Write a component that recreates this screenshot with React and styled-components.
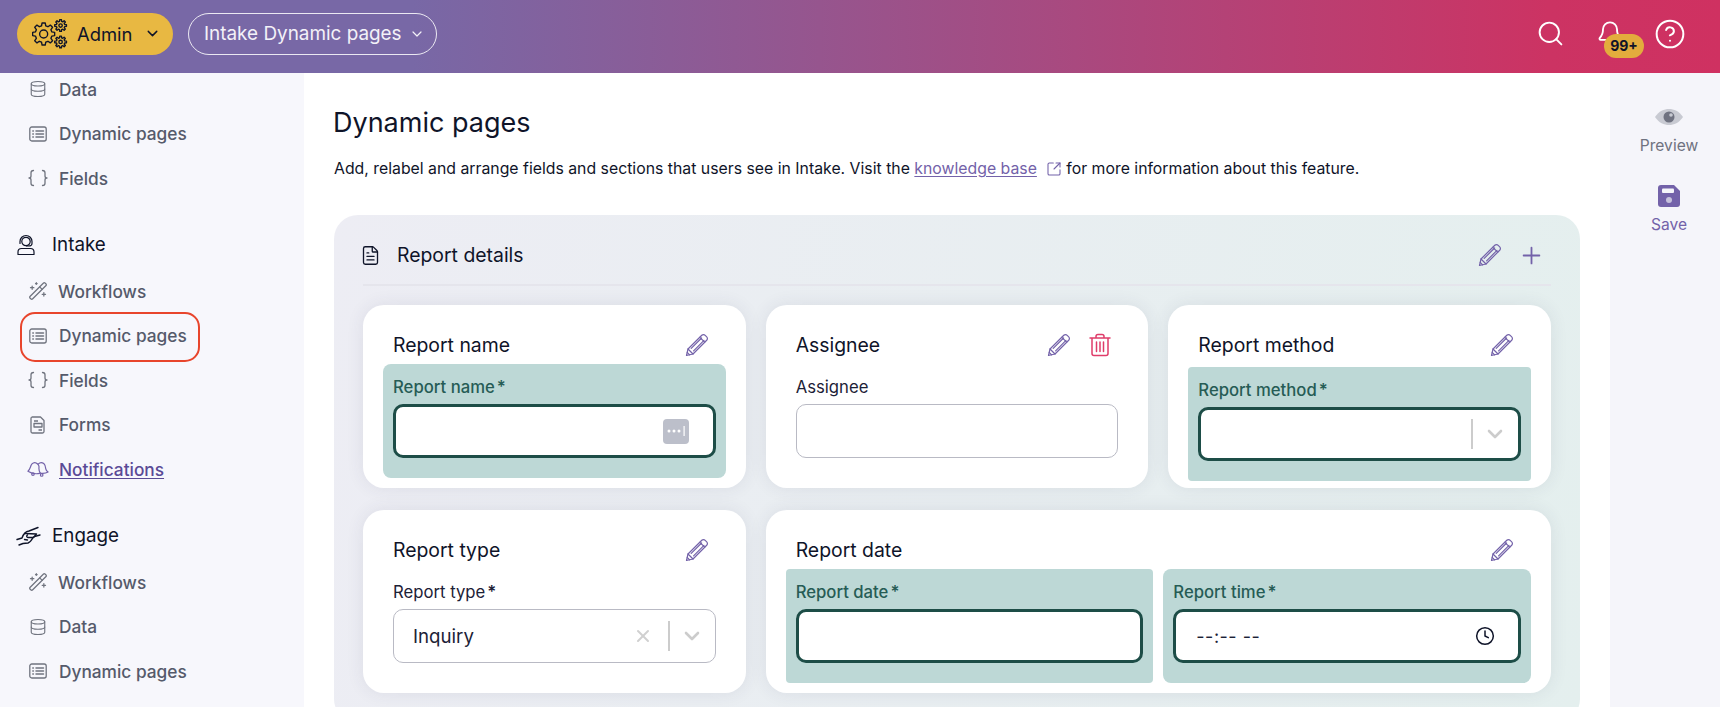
import React from "react";
import styled, { createGlobalStyle } from "styled-components";
import { Search, Bell, CircleHelp, WandSparkles, Database, ChevronDown, X, Clock, SquareArrowOutUpRight, Plus, FileText } from "lucide-react";

const Global = createGlobalStyle`
  html, body { margin: 0; padding: 0; height: 100%; overflow: hidden; background: #fff; }
  body { font-family: Inter, "Noto Sans", sans-serif; color: #0f1429; }
  *, *::before, *::after { box-sizing: border-box; }
`;

const Page = styled.div`
  width: 1720px; height: 707px; display: flex; flex-direction: column; overflow: hidden;
`;
const Header = styled.header`
  height: 73px; flex: none; display: flex; align-items: center; padding: 0 0 6px 17px; gap: 15px;
  background: linear-gradient(90deg, #7868a6 0, #7868a6 24%, #cc3363 90%, #cf3161 100%);
`;
const AdminPill = styled.button`
  height: 42px; width: 156px; border: 0; border-radius: 21px; background: #e8b842; color: #0f1429;
  display: flex; align-items: center; padding: 0 0 0 15px; font: 400 18.4px Inter, sans-serif;
  span { margin: 0 12px 0 9px; }
`;
const PagePill = styled.button`
  height: 42px; width: 249px; border: 1.5px solid rgba(255,255,255,.85); border-radius: 21px; background: transparent; color: #f3f1f8;
  display: flex; align-items: center; padding: 0 0 0 15px; font: 400 18.9px Inter, sans-serif; white-space: nowrap;
  span { margin-right: 7px; }
`;
const HeaderTools = styled.div`
  margin-left: auto; display: flex; align-items: center; color: #fff; padding-right: 20px;
`;
const ToolButton = styled.div`
  position: relative; display: flex; width: 60px; justify-content: center; align-items: center;
`;
const Badge = styled.span`
  position: absolute; left: 24px; top: 14px; width: 40px; height: 24px; border-radius: 12px; background: #e3ac3d; color: #0f1429;
  font: 700 14px/24px Inter, sans-serif; text-align: center;
`;
const Body = styled.div`
  flex: 1; display: flex; min-height: 0;
`;
const Sidebar = styled.aside`
  width: 304px; flex: none; background: #f7f7fc; overflow: hidden;
`;
const NavList = styled.nav`
  margin-top: -6px; padding-left: 20px;
`;
const NavItem = styled.a`
  position: relative; display: flex; align-items: center; height: 44.5px; gap: 12px; padding-left: 9px;
  font-size: 17.3px; font-weight: 500; color: ${p => p.$link ? "#5a4a96" : "#555a6b"};
  text-decoration: ${p => p.$link ? "underline" : "none"};
  text-underline-offset: 2px;
  svg { width: 18px; height: 18px; flex: none; color: ${p => p.$link ? "#7362a9" : "#70747f"}; }
  ${p => p.$marked && `
    &::after { content: ""; position: absolute; left: 0; top: -2px; width: 180px; height: 50px; border: 2.5px solid #e8452c; border-radius: 15px; }
  `}
`;
const Wand = styled(WandSparkles)`
  &&& { width: 20px; height: 20px; margin: 0 -2px 0 -1px; }
`;
const NavHeading = styled.div`
  display: flex; align-items: center; height: 49px; margin-top: 19.5px; margin-left: -3px; gap: 10px; font-size: 18.8px; color: #0f1429;
  svg { width: ${p => p.$wide ? "26px" : "18px"}; height: 22px; flex: none; margin-left: ${p => p.$wide ? "-1px" : "0"}; margin-right: ${p => p.$wide ? "0" : "7px"}; }
`;
const Main = styled.main`
  flex: 1; min-width: 0; padding: 0 30px; overflow: hidden;
`;
const Title = styled.h1`
  margin: 34px 0 0 -1px; font-size: 27px; line-height: 32px; font-weight: 400; color: #0f1429;
`;
const Intro = styled.p`
  margin: 18px 0 0; font-size: 15.82px; line-height: 24px; color: #0f1429; white-space: nowrap;
  display: flex; align-items: center;
`;
const KbLink = styled.a`
  color: #7362a9; text-decoration: underline; margin: 0 9px 0 0; text-underline-offset: 2px;
`;
const KbIcon = styled.span`
  display: flex; color: #7362a9;
`;
const Section = styled.section`
  margin-top: 34px; padding: 0 29px 30px; border-radius: 24px;
  background: linear-gradient(100deg, #ededf4 0, #e4efee 100%);
`;
const SectionHead = styled.div`
  height: 71px; display: flex; align-items: center; border-bottom: 2px solid #e5e5ec; font-size: 19.4px; padding: 11px 6px 0 0;
  > svg { margin-left: -3px; }
`;
const SectionName = styled.span`
  margin-left: 16px; flex: 1;
`;
const Actions = styled.div`
  display: flex; align-items: center; gap: ${p => p.$gap || 18}px; color: #7362a9; height: 28px;
`;
const Grid = styled.div`
  display: grid; grid-template-columns: repeat(3, 1fr); gap: 22px 20px; margin-top: 19px;
`;
const Card = styled.div`
  grid-column: span ${p => p.$span || 1}; height: 183px; padding: 0 20px; background: #fff; border-radius: 21px;
  box-shadow: 0 0 18px rgba(60,60,90,.09);
`;
const CardHead = styled.div`
  height: ${p => p.$tall ? 62 : 59}px; display: flex; justify-content: space-between; padding: 26px 17px 0 10px; font-size: 19.4px; line-height: 28px;
`;
const FieldRow = styled.div`
  display: flex; gap: 10px;
`;
const Field = styled.div`
  flex: 1; padding: 10px 10px 20px; border-radius: ${p => p.$square ? "4px" : "8px"};
  background: ${p => p.$on ? "#bdd8d6" : "transparent"};
`;
const Label = styled.label`
  display: block; height: 30px; font-size: 16.7px; line-height: 26px; white-space: nowrap;
  font-weight: ${p => p.$on ? 500 : 400}; color: ${p => p.$on ? "#265c55" : "#1c2136"};
`;
const Star = styled.span`
  margin-left: 2px; font-weight: 600;
`;
const Input = styled.div`
  height: 54px; display: flex; align-items: center; background: #fff; border-radius: 10px;
  border: ${p => p.$on ? "3px solid #1d4d47" : "1.5px solid #b9bac4"};
  font-size: 18.7px; color: #1c2136;
`;
const Value = styled.span`
  flex: 1; padding-left: 19px;
`;
const TimeValue = styled.span`
  flex: 1; padding-left: 20px; font-size: 18px; letter-spacing: .5px; padding-top: 1px;
`;
const Divider = styled.i`
  width: 1.5px; height: 30px; background: #ccc;
`;
const Caret = styled.span`
  display: flex; width: 45px; justify-content: center; color: #ccc;
`;
const ClearX = styled.span`
  display: flex; color: #d0d0d0; margin-right: 15px;
`;
const KeyTag = styled.span`
  width: 26px; height: 25px; background: #bcbfca; border-radius: 4px; margin: 0 24px 0 auto; display: flex; align-items: center; justify-content: center;
`;
const ClockWrap = styled.span`
  display: flex; margin-right: 23px; color: #0f1429;
`;
const Rail = styled.aside`
  width: 110px; flex: none; background: #f5f5fa; display: flex; flex-direction: column; align-items: center; padding: 31px 0 0 8px;
`;
const RailAction = styled.div`
  display: flex; flex-direction: column; align-items: center; height: 79px; font-size: 15.6px; line-height: 24px;
  color: ${p => p.$primary ? "#7362a9" : "#6f7280"};
  svg { height: 26px; margin-bottom: 4px; }
`;

const Pencil = ({ size = 24 }) => (
  <svg width={size} height={size} viewBox="0 0 24 24" fill="none" stroke="#7362a9" strokeWidth="1.2" strokeLinejoin="round" strokeLinecap="round">
    <path d="M1.5 22.5l1.5-6.500L16.800 2.300a2.400 2.400 0 0 1 3.400 0l1.500 1.500a2.400 2.400 0 0 1 0 3.400L8 21z" />
    <path d="M3 16l5 5M14.800 4.300l4.900 4.900M6.200 15.400L16.600 5M8.600 17.800L19 7.400M2.200 19.400l2.400 2.400" />
  </svg>
);
const Trash = () => (
  <svg width="22" height="24" viewBox="0 0 22 24" fill="none" stroke="#df3c6a" strokeWidth="1.5" strokeLinecap="round" strokeLinejoin="round">
    <path d="M1 5h20M7 5V3.500A2 2 0 0 1 9 1.500h4a2 2 0 0 1 2 2V5M3 5v15.500a2 2 0 0 0 2 2h12a2 2 0 0 0 2-2V5M7.500 9v9.500M11 9v9.500M14.500 9v9.500" />
  </svg>
);
const ListBox = () => (
  <svg viewBox="0 0 18 18" fill="none" stroke="currentColor" strokeWidth="1.3" strokeLinecap="round">
    <rect x="0.8" y="2" width="16.4" height="14" rx="2" />
    <path d="M7 6h7.500M7 9h7.500M7 12h7.500M3.800 6h.6M3.800 9h.6M3.800 12h.6" strokeWidth="1.5" />
  </svg>
);
const Curly = () => (
  <svg viewBox="0 0 20 18" fill="none" stroke="currentColor" strokeWidth="1.3" strokeLinecap="round" strokeLinejoin="round" style={{ width: 20, marginLeft: -1, marginRight: -1 }}>
    <path d="M5.500 1.500C3.800 1.500 3 2.200 3 3.800V7c0 1.200-.7 2-2 2 1.300 0 2 .8 2 2v3.200c0 1.600.8 2.300 2.500 2.300" />
    <path d="M14.500 1.500c1.700 0 2.500.7 2.500 2.300V7c0 1.200.7 2 2 2-1.300 0-2 .8-2 2v3.200c0 1.600-.8 2.300-2.500 2.300" />
  </svg>
);
const FormDoc = () => (
  <svg viewBox="0 0 18 18" fill="none" stroke="currentColor" strokeWidth="1.3" strokeLinejoin="round">
    <path d="M3 1h8.500L15 4.500v11a1.500 1.500 0 0 1-1.500 1.500h-10A1.500 1.500 0 0 1 2 15.500V2.500A1.500 1.500 0 0 1 3 1z" />
    <path d="M5 5h4M5 7.500h8v3.500H5zM9.500 14H13" />
  </svg>
);
const DoubleBell = () => (
  <svg viewBox="0 0 24 18" fill="none" stroke="currentColor" strokeWidth="1.3" strokeLinejoin="round" strokeLinecap="round" style={{ width: 22, height: 18, marginLeft: -2, marginRight: -2 }}>
    <path d="M1 11.500c2-1.500 2.500-4 3.500-6.500C5.500 2.500 8 1.500 10 2.500c2 1 3.500 3.500 3 6 0 1.800.5 3.500 1.500 5-4 1.200-9 .8-13.500-2z" />
    <path d="M12.500 3.500C14 1.800 16.500 1.800 18.300 3c1.700 1.500 2 3.800 2.200 5.800.2 1.200 1.200 2.600 2.500 3.400-2.500 1.500-5.500 1.800-8.500 1.300" />
    <circle cx="6.500" cy="14.500" r="1.400" /><circle cx="16" cy="15.500" r="1.400" />
  </svg>
);
const Headset = () => (
  <svg viewBox="0 0 18 22" fill="none" stroke="currentColor" strokeWidth="1.2" strokeLinecap="round" strokeLinejoin="round">
    <circle cx="9" cy="7.500" r="4.200" />
    <path d="M3 9.500V7.500a6 6 0 0 1 12 0v2c0 1.500-1.500 2.500-3.500 2.500H9.500" />
    <path d="M1 20.500v-2.500c0-2 1.500-3.500 3.500-3.500h9c2 0 3.500 1.500 3.500 3.500v2.500z" />
  </svg>
);
const Shake = () => (
  <svg viewBox="0 0 26 22" fill="none" stroke="currentColor" strokeWidth="1.4" strokeLinecap="round" strokeLinejoin="round">
    <path d="M1 14.500l5-1.500c1-3 3-6.500 7-7l9-3.500M3 20l4-1.500 5-.5c2.500-1 4-3.500 5-5.500l1.500-1 5.500-1.500" />
    <path d="M9 8.500l11.500.5-3 3.500H12c-1.200 0-2-1.500-.5-2.500M8.500 14.500l3 .5" />
  </svg>
);
const gearPath = (cx, cy, R, r, n) => {
  let d = "";
  const s = (Math.PI * 2) / n;
  for (let i = 0; i < n; i++) {
    const a = i * s;
    const pts = [[r, a - s * 0.32], [R, a - s * 0.18], [R, a + s * 0.18], [r, a + s * 0.32]];
    pts.forEach(([q, t], k) => {
      d += `${i === 0 && k === 0 ? "M" : "L"}${(cx + q * Math.cos(t)).toFixed(2)} ${(cy + q * Math.sin(t)).toFixed(2)}`;
    });
  }
  return d + "Z";
};
const Gears = () => (
  <svg width="36" height="30" viewBox="0 0 34 28" fill="none" stroke="#0f1429" strokeWidth="1.3" strokeLinejoin="round">
    <path d={gearPath(11, 14, 10.5, 8, 8)} />
    <circle cx="11" cy="14" r="3.8" />
    <path d={gearPath(27, 6, 5.6, 4, 8)} />
    <circle cx="27" cy="6" r="1.6" />
    <path d={gearPath(27, 21.5, 5.6, 4, 8)} />
    <circle cx="27" cy="21.5" r="1.6" />
  </svg>
);
const KeyDots = () => (
  <svg width="20" height="10" viewBox="0 0 20 10" fill="#fff">
    <circle cx="3" cy="5" r="1.5" /><circle cx="8" cy="5" r="1.5" /><circle cx="13" cy="5" r="1.5" /><rect x="17.5" y="0" width="1.2" height="10" />
  </svg>
);
const Eye = () => (
  <svg width="28" height="26" viewBox="0 0 28 26">
    <path d="M0 13C4 7 9 5 14 5s10 2 14 8c-4 6-9 8-14 8S4 19 0 13z" fill="#c8cad2" />
    <circle cx="14" cy="13" r="5.5" fill="#6f7280" />
    <circle cx="16" cy="11" r="1.8" fill="#c8cad2" />
  </svg>
);
const Floppy = () => (
  <svg width="22" height="26" viewBox="0 0 22 26">
    <path d="M3 2h13l6 6v13a3 3 0 0 1-3 3H3a3 3 0 0 1-3-3V5a3 3 0 0 1 3-3z" fill="#7362a9" />
    <rect x="4" y="5.5" width="12" height="4.5" rx="1" fill="#f5f5fa" />
    <circle cx="11" cy="17" r="3" fill="#c6c1dc" />
  </svg>
);

const Chevron = ({ size = 24 }) => <ChevronDown size={size} strokeWidth={2.6} />;

export default function App() {
  return (
    <Page>
      <Global />
      <Header>
        <AdminPill><Gears /><span>Admin</span><ChevronDown size={17} strokeWidth={2} /></AdminPill>
        <PagePill><span>Intake Dynamic pages</span><ChevronDown size={16} strokeWidth={1.8} /></PagePill>
        <HeaderTools>
          <ToolButton><Search size={29} strokeWidth={1.6} /></ToolButton>
          <ToolButton>
            <Bell size={28} strokeWidth={1.6} />
            <Badge>99+</Badge>
          </ToolButton>
          <ToolButton><CircleHelp size={32} strokeWidth={1.5} /></ToolButton>
        </HeaderTools>
      </Header>
      <Body>
        <Sidebar>
          <NavList>
            <NavItem><Database strokeWidth={1.5} />Data</NavItem>
            <NavItem><ListBox />Dynamic pages</NavItem>
            <NavItem><Curly />Fields</NavItem>
            <NavHeading><Headset />Intake</NavHeading>
            <NavItem><Wand strokeWidth={1.5} />Workflows</NavItem>
            <NavItem $marked><ListBox />Dynamic pages</NavItem>
            <NavItem><Curly />Fields</NavItem>
            <NavItem><FormDoc />Forms</NavItem>
            <NavItem $link><DoubleBell />Notifications</NavItem>
            <NavHeading $wide><Shake />Engage</NavHeading>
            <NavItem><Wand strokeWidth={1.5} />Workflows</NavItem>
            <NavItem><Database strokeWidth={1.5} />Data</NavItem>
            <NavItem><ListBox />Dynamic pages</NavItem>
          </NavList>
        </Sidebar>
        <Main>
          <Title>Dynamic pages</Title>
          <Intro>
            Add, relabel and arrange fields and sections that users see in Intake. Visit the&nbsp;
            <KbLink>knowledge base</KbLink>
            <KbIcon><SquareArrowOutUpRight size={16} strokeWidth={1.6} /></KbIcon>
            &nbsp;for more information about this feature.
          </Intro>
          <Section>
            <SectionHead>
              <FileText size={21} strokeWidth={1.5} />
              <SectionName>Report details</SectionName>
              <Actions $gap={16}>
                <Pencil />
                <Plus size={27} strokeWidth={1.6} />
              </Actions>
            </SectionHead>
            <Grid>
              <Card>
                <CardHead>Report name<Actions><Pencil /></Actions></CardHead>
                <Field $on>
                  <Label $on>Report name<Star>*</Star></Label>
                  <Input $on><KeyTag><KeyDots /></KeyTag></Input>
                </Field>
              </Card>
              <Card>
                <CardHead>Assignee<Actions $gap={18}><Pencil /><Trash /></Actions></CardHead>
                <Field>
                  <Label>Assignee</Label>
                  <Input />
                </Field>
              </Card>
              <Card>
                <CardHead $tall>Report method<Actions><Pencil /></Actions></CardHead>
                <Field $on $square>
                  <Label $on>Report method<Star>*</Star></Label>
                  <Input $on>
                    <Value />
                    <Divider />
                    <Caret><Chevron /></Caret>
                  </Input>
                </Field>
              </Card>
              <Card>
                <CardHead>Report type<Actions><Pencil /></Actions></CardHead>
                <Field>
                  <Label>Report type<Star>*</Star></Label>
                  <Input>
                    <Value>Inquiry</Value>
                    <ClearX><X size={20} strokeWidth={2.4} /></ClearX>
                    <Divider />
                    <Caret><Chevron /></Caret>
                  </Input>
                </Field>
              </Card>
              <Card $span={2}>
                <CardHead>Report date<Actions><Pencil /></Actions></CardHead>
                <FieldRow>
                  <Field $on $square>
                    <Label $on>Report date<Star>*</Star></Label>
                    <Input $on />
                  </Field>
                  <Field $on>
                    <Label $on>Report time<Star>*</Star></Label>
                    <Input $on>
                      <TimeValue>--:-- --</TimeValue>
                      <ClockWrap><Clock size={20} strokeWidth={1.8} /></ClockWrap>
                    </Input>
                  </Field>
                </FieldRow>
              </Card>
            </Grid>
          </Section>
        </Main>
        <Rail>
          <RailAction><Eye />Preview</RailAction>
          <RailAction $primary><Floppy />Save</RailAction>
        </Rail>
      </Body>
    </Page>
  );
}
